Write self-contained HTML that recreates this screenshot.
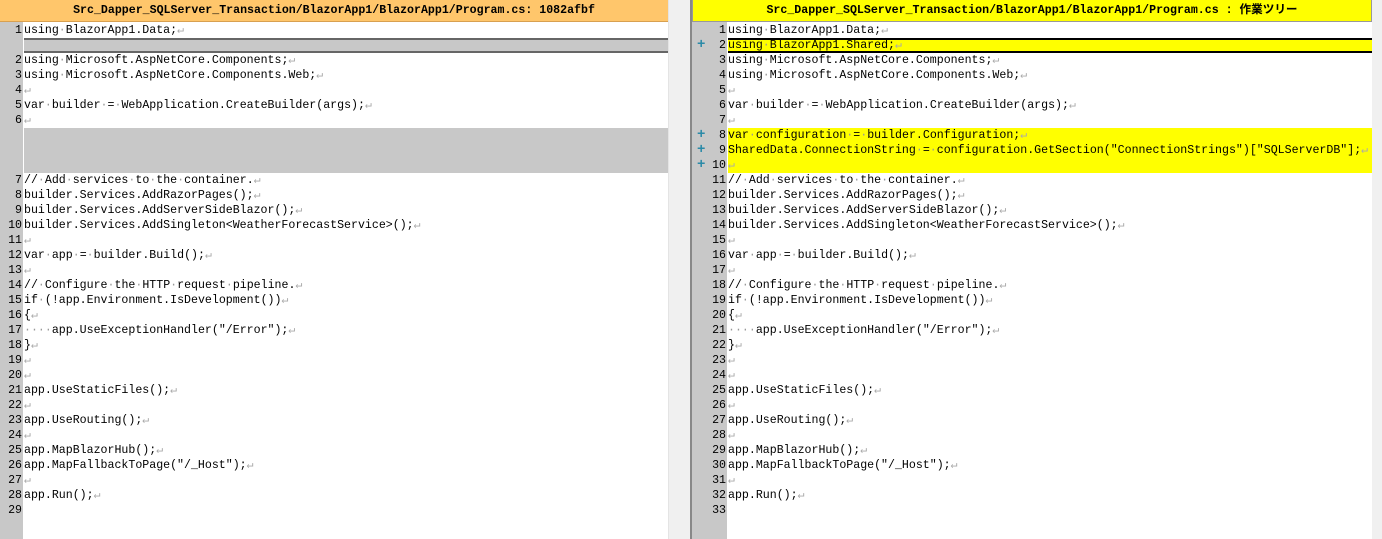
<!DOCTYPE html>
<html><head><meta charset="utf-8"><style>
*{margin:0;padding:0;box-sizing:border-box}
body{width:1382px;height:539px;overflow:hidden;background:#fff;position:relative;font-family:"Liberation Mono","DejaVu Sans Mono",monospace;font-size:11.6px;color:#000}
.hdr{position:absolute;top:0;height:22px;font-weight:bold;font-size:11.6px;text-align:center;line-height:21px;font-family:"Liberation Mono","Noto Sans CJK JP",monospace}
.gut{position:absolute;top:22px;bottom:0;background:#c8c8c8}
.row{position:absolute;height:15px;line-height:15px;white-space:pre}
.n{position:absolute;text-align:right;height:15px;line-height:15px}
i{font-style:normal;color:#999}
b{font-weight:normal;color:#aaa}
.y{background:#ffff00}
.g{background:#c8c8c8}
.p{position:absolute;color:#2a8aa8;font-weight:bold;font-size:14px;line-height:15px;height:15px}
</style></head><body>
<!-- left -->
<div class="hdr" style="left:0;width:668px;background:#ffc66b;border-bottom:1px solid #d8a050">Src_Dapper_SQLServer_Transaction/BlazorApp1/BlazorApp1/Program.cs: 1082afbf</div>
<div class="gut" style="left:0;width:23px"></div>
<div style="position:absolute;left:668px;top:0;width:23px;height:539px;background:#f0f0f0;border-left:1px solid #e4e4e4"></div>
<div style="position:absolute;left:690px;top:0;width:2px;height:539px;background:#888"></div>
<div style="position:absolute;left:24px;top:38px;width:644px;height:15px;background:#c8c8c8;border-top:2px solid #666;border-bottom:2px solid #666"></div>
<div style="position:absolute;left:24px;top:128px;width:644px;height:45px;background:#c8c8c8"></div>
<div style="position:absolute;left:0;top:23px;width:668px">
<div class="n" style="left:0;width:22px;top:0">1</div><div class="row" style="left:24px;top:0">using<i>·</i>BlazorApp1.Data;<b>↵</b></div>
<div class="n" style="left:0;width:22px;top:30px">2</div><div class="row" style="left:24px;top:30px">using<i>·</i>Microsoft.AspNetCore.Components;<b>↵</b></div>
<div class="n" style="left:0;width:22px;top:45px">3</div><div class="row" style="left:24px;top:45px">using<i>·</i>Microsoft.AspNetCore.Components.Web;<b>↵</b></div>
<div class="n" style="left:0;width:22px;top:60px">4</div><div class="row" style="left:24px;top:60px"><b>↵</b></div>
<div class="n" style="left:0;width:22px;top:75px">5</div><div class="row" style="left:24px;top:75px">var<i>·</i>builder<i>·</i>=<i>·</i>WebApplication.CreateBuilder(args);<b>↵</b></div>
<div class="n" style="left:0;width:22px;top:90px">6</div><div class="row" style="left:24px;top:90px"><b>↵</b></div>
<div class="n" style="left:0;width:22px;top:150px">7</div><div class="row" style="left:24px;top:150px">//<i>·</i>Add<i>·</i>services<i>·</i>to<i>·</i>the<i>·</i>container.<b>↵</b></div>
<div class="n" style="left:0;width:22px;top:165px">8</div><div class="row" style="left:24px;top:165px">builder.Services.AddRazorPages();<b>↵</b></div>
<div class="n" style="left:0;width:22px;top:180px">9</div><div class="row" style="left:24px;top:180px">builder.Services.AddServerSideBlazor();<b>↵</b></div>
<div class="n" style="left:0;width:22px;top:195px">10</div><div class="row" style="left:24px;top:195px">builder.Services.AddSingleton&lt;WeatherForecastService&gt;();<b>↵</b></div>
<div class="n" style="left:0;width:22px;top:210px">11</div><div class="row" style="left:24px;top:210px"><b>↵</b></div>
<div class="n" style="left:0;width:22px;top:225px">12</div><div class="row" style="left:24px;top:225px">var<i>·</i>app<i>·</i>=<i>·</i>builder.Build();<b>↵</b></div>
<div class="n" style="left:0;width:22px;top:240px">13</div><div class="row" style="left:24px;top:240px"><b>↵</b></div>
<div class="n" style="left:0;width:22px;top:255px">14</div><div class="row" style="left:24px;top:255px">//<i>·</i>Configure<i>·</i>the<i>·</i>HTTP<i>·</i>request<i>·</i>pipeline.<b>↵</b></div>
<div class="n" style="left:0;width:22px;top:270px">15</div><div class="row" style="left:24px;top:270px">if<i>·</i>(!app.Environment.IsDevelopment())<b>↵</b></div>
<div class="n" style="left:0;width:22px;top:285px">16</div><div class="row" style="left:24px;top:285px">{<b>↵</b></div>
<div class="n" style="left:0;width:22px;top:300px">17</div><div class="row" style="left:24px;top:300px"><i>····</i>app.UseExceptionHandler("/Error");<b>↵</b></div>
<div class="n" style="left:0;width:22px;top:315px">18</div><div class="row" style="left:24px;top:315px">}<b>↵</b></div>
<div class="n" style="left:0;width:22px;top:330px">19</div><div class="row" style="left:24px;top:330px"><b>↵</b></div>
<div class="n" style="left:0;width:22px;top:345px">20</div><div class="row" style="left:24px;top:345px"><b>↵</b></div>
<div class="n" style="left:0;width:22px;top:360px">21</div><div class="row" style="left:24px;top:360px">app.UseStaticFiles();<b>↵</b></div>
<div class="n" style="left:0;width:22px;top:375px">22</div><div class="row" style="left:24px;top:375px"><b>↵</b></div>
<div class="n" style="left:0;width:22px;top:390px">23</div><div class="row" style="left:24px;top:390px">app.UseRouting();<b>↵</b></div>
<div class="n" style="left:0;width:22px;top:405px">24</div><div class="row" style="left:24px;top:405px"><b>↵</b></div>
<div class="n" style="left:0;width:22px;top:420px">25</div><div class="row" style="left:24px;top:420px">app.MapBlazorHub();<b>↵</b></div>
<div class="n" style="left:0;width:22px;top:435px">26</div><div class="row" style="left:24px;top:435px">app.MapFallbackToPage("/_Host");<b>↵</b></div>
<div class="n" style="left:0;width:22px;top:450px">27</div><div class="row" style="left:24px;top:450px"><b>↵</b></div>
<div class="n" style="left:0;width:22px;top:465px">28</div><div class="row" style="left:24px;top:465px">app.Run();<b>↵</b></div>
<div class="n" style="left:0;width:22px;top:480px">29</div>
</div>
<!-- right -->
<div class="hdr" style="left:692px;width:680px;background:#ffff00;border:1px solid #999;border-top:0">Src_Dapper_SQLServer_Transaction/BlazorApp1/BlazorApp1/Program.cs : 作業ツリー</div>
<div class="gut" style="left:692px;width:35px"></div>
<div style="position:absolute;left:1372px;top:0;width:10px;height:539px;background:#f0f0f0"></div>
<div style="position:absolute;left:728px;top:38px;width:644px;height:15px;background:#ffff00;border-top:2px solid #000;border-bottom:2px solid #000"></div>
<div style="position:absolute;left:728px;top:128px;width:644px;height:45px;background:#ffff00"></div>
<div class="p" style="left:697px;top:38px">+</div>
<div class="p" style="left:697px;top:128px">+</div>
<div class="p" style="left:697px;top:143px">+</div>
<div class="p" style="left:697px;top:158px">+</div>
<div style="position:absolute;left:692px;top:23px;width:680px">
<div class="n" style="left:0;width:34px;top:0">1</div><div class="row" style="left:36px;top:0">using<i>·</i>BlazorApp1.Data;<b>↵</b></div>
<div class="n" style="left:0;width:34px;top:15px">2</div><div class="row" style="left:36px;top:15px">using<i>·</i>BlazorApp1.Shared;<b>↵</b></div>
<div class="n" style="left:0;width:34px;top:30px">3</div><div class="row" style="left:36px;top:30px">using<i>·</i>Microsoft.AspNetCore.Components;<b>↵</b></div>
<div class="n" style="left:0;width:34px;top:45px">4</div><div class="row" style="left:36px;top:45px">using<i>·</i>Microsoft.AspNetCore.Components.Web;<b>↵</b></div>
<div class="n" style="left:0;width:34px;top:60px">5</div><div class="row" style="left:36px;top:60px"><b>↵</b></div>
<div class="n" style="left:0;width:34px;top:75px">6</div><div class="row" style="left:36px;top:75px">var<i>·</i>builder<i>·</i>=<i>·</i>WebApplication.CreateBuilder(args);<b>↵</b></div>
<div class="n" style="left:0;width:34px;top:90px">7</div><div class="row" style="left:36px;top:90px"><b>↵</b></div>
<div class="n" style="left:0;width:34px;top:105px">8</div><div class="row" style="left:36px;top:105px">var<i>·</i>configuration<i>·</i>=<i>·</i>builder.Configuration;<b>↵</b></div>
<div class="n" style="left:0;width:34px;top:120px">9</div><div class="row" style="left:36px;top:120px">SharedData.ConnectionString<i>·</i>=<i>·</i>configuration.GetSection("ConnectionStrings")["SQLServerDB"];<b>↵</b></div>
<div class="n" style="left:0;width:34px;top:135px">10</div><div class="row" style="left:36px;top:135px"><b>↵</b></div>
<div class="n" style="left:0;width:34px;top:150px">11</div><div class="row" style="left:36px;top:150px">//<i>·</i>Add<i>·</i>services<i>·</i>to<i>·</i>the<i>·</i>container.<b>↵</b></div>
<div class="n" style="left:0;width:34px;top:165px">12</div><div class="row" style="left:36px;top:165px">builder.Services.AddRazorPages();<b>↵</b></div>
<div class="n" style="left:0;width:34px;top:180px">13</div><div class="row" style="left:36px;top:180px">builder.Services.AddServerSideBlazor();<b>↵</b></div>
<div class="n" style="left:0;width:34px;top:195px">14</div><div class="row" style="left:36px;top:195px">builder.Services.AddSingleton&lt;WeatherForecastService&gt;();<b>↵</b></div>
<div class="n" style="left:0;width:34px;top:210px">15</div><div class="row" style="left:36px;top:210px"><b>↵</b></div>
<div class="n" style="left:0;width:34px;top:225px">16</div><div class="row" style="left:36px;top:225px">var<i>·</i>app<i>·</i>=<i>·</i>builder.Build();<b>↵</b></div>
<div class="n" style="left:0;width:34px;top:240px">17</div><div class="row" style="left:36px;top:240px"><b>↵</b></div>
<div class="n" style="left:0;width:34px;top:255px">18</div><div class="row" style="left:36px;top:255px">//<i>·</i>Configure<i>·</i>the<i>·</i>HTTP<i>·</i>request<i>·</i>pipeline.<b>↵</b></div>
<div class="n" style="left:0;width:34px;top:270px">19</div><div class="row" style="left:36px;top:270px">if<i>·</i>(!app.Environment.IsDevelopment())<b>↵</b></div>
<div class="n" style="left:0;width:34px;top:285px">20</div><div class="row" style="left:36px;top:285px">{<b>↵</b></div>
<div class="n" style="left:0;width:34px;top:300px">21</div><div class="row" style="left:36px;top:300px"><i>····</i>app.UseExceptionHandler("/Error");<b>↵</b></div>
<div class="n" style="left:0;width:34px;top:315px">22</div><div class="row" style="left:36px;top:315px">}<b>↵</b></div>
<div class="n" style="left:0;width:34px;top:330px">23</div><div class="row" style="left:36px;top:330px"><b>↵</b></div>
<div class="n" style="left:0;width:34px;top:345px">24</div><div class="row" style="left:36px;top:345px"><b>↵</b></div>
<div class="n" style="left:0;width:34px;top:360px">25</div><div class="row" style="left:36px;top:360px">app.UseStaticFiles();<b>↵</b></div>
<div class="n" style="left:0;width:34px;top:375px">26</div><div class="row" style="left:36px;top:375px"><b>↵</b></div>
<div class="n" style="left:0;width:34px;top:390px">27</div><div class="row" style="left:36px;top:390px">app.UseRouting();<b>↵</b></div>
<div class="n" style="left:0;width:34px;top:405px">28</div><div class="row" style="left:36px;top:405px"><b>↵</b></div>
<div class="n" style="left:0;width:34px;top:420px">29</div><div class="row" style="left:36px;top:420px">app.MapBlazorHub();<b>↵</b></div>
<div class="n" style="left:0;width:34px;top:435px">30</div><div class="row" style="left:36px;top:435px">app.MapFallbackToPage("/_Host");<b>↵</b></div>
<div class="n" style="left:0;width:34px;top:450px">31</div><div class="row" style="left:36px;top:450px"><b>↵</b></div>
<div class="n" style="left:0;width:34px;top:465px">32</div><div class="row" style="left:36px;top:465px">app.Run();<b>↵</b></div>
<div class="n" style="left:0;width:34px;top:480px">33</div>
</div>
</body></html>
